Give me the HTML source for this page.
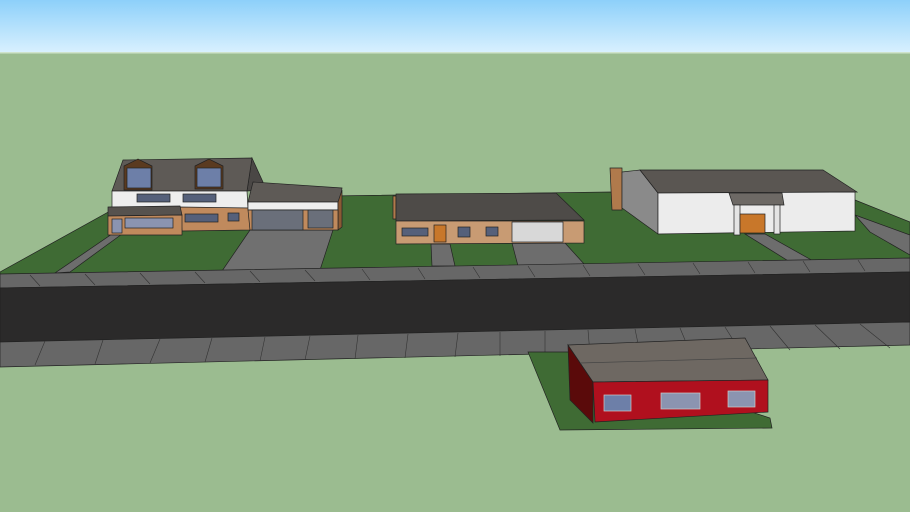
<!DOCTYPE html>
<html><head><meta charset="utf-8"><style>html,body{margin:0;padding:0;background:#9bbc90;overflow:hidden}svg{display:block}</style></head>
<body>
<svg width="910" height="512" viewBox="0 0 910 512" xmlns="http://www.w3.org/2000/svg">
<defs>
<linearGradient id="sky" x1="0" y1="0" x2="0" y2="1"><stop offset="0" stop-color="#8dd0fa"/><stop offset="1" stop-color="#d8f0fe"/></linearGradient>
</defs>
<rect width="910" height="512" fill="#9bbc90"/>
<rect width="910" height="52" fill="url(#sky)"/>
<rect y="52" width="910" height="1.5" fill="#cfe3cb"/>
<g stroke="#222" stroke-width="0.7">
<polygon points="0,272 112,210 330,196 610,192 855,200 910,222 910,262 0,276" fill="#3f6b34"/>
<polygon points="250,230 333,230 320,270 222,271" fill="#707070"/>
<polygon points="112,234 122,234 70,272 55,273" fill="#6d6d6d"/>
<polygon points="431,244 450,244 455,266 432,266" fill="#6d6d6d"/>
<polygon points="512,243 565,243 585,265 518,266" fill="#6d6d6d"/>
<polygon points="745,234 765,234 815,262 790,262" fill="#6d6d6d"/>
<polygon points="855,215 910,235 910,255 870,232" fill="#6d6d6d"/>
<polygon points="0,274 910,258 910,272 0,288" fill="#676767"/>
<polygon points="0,288 910,272 910,322 0,342" fill="#2b2a2a"/>
<polygon points="0,342 910,322 910,345 0,367" fill="#676767"/>
</g>
<g stroke="#333" stroke-width="0.6">
<path d="M40,286 L30,275 M95,285 L85,274 M150,284 L140,273 M205,283 L195,272 M260,282 L250,271 M315,281 L305,270 M370,280 L362,269 M425,279 L418,268 M480,278 L473,267 M535,277 L528,266 M590,276 L583,265 M645,275 L638,264 M700,274 L693,263 M755,273 L748,262 M810,272 L803,261 M865,271 L858,260"/>
<path d="M35,365 L45,341 M95,364 L103,340 M150,363 L160,339 M205,362 L212,338 M260,361 L265,337 M305,360 L310,336 M355,359 L358,335 M405,358 L408,334 M455,357 L458,333 M500,356 L500,332 M545,355 L545,331 M590,354 L588,330 M640,353 L635,329 M690,352 L680,328 M740,351 L725,327 M790,350 L770,326 M840,349 L815,325 M890,348 L860,324"/>
</g>
<g stroke="#222" stroke-width="0.7">
<polygon points="252,158 263,182 262,190 247,191" fill="#4a4745"/>
<polygon points="123,160 252,158 247,191 112,191" fill="#5e5a56"/>
<polygon points="124,166 138,159 152,166 152,190 124,190" fill="#5a3a20"/>
<rect x="127" y="168" width="24" height="20" fill="#6d7fa8"/>
<polygon points="195,166 209,159 223,166 223,189 195,189" fill="#5a3a20"/>
<rect x="197" y="168" width="24" height="19" fill="#6d7fa8"/>
<polygon points="112,191 247,191 248,210 112,210" fill="#eeeeee"/>
<rect x="137" y="194" width="33" height="8" fill="#55607a"/>
<rect x="183" y="194" width="33" height="8" fill="#55607a"/>
<polygon points="180,207 250,208 250,230 182,231" fill="#c08a5d"/>
<rect x="185" y="214" width="33" height="8" fill="#55607a"/>
<rect x="228" y="213" width="11" height="8" fill="#55607a"/>
<polygon points="108,207 180,206 182,215 108,216" fill="#56524e"/>
<polygon points="108,216 182,215 182,235 108,235" fill="#c08a5d"/>
<rect x="112" y="219" width="10" height="14" fill="#8b94b0"/>
<rect x="125" y="218" width="48" height="10" fill="#8b94b0"/>
<polygon points="253,182 342,188 340,202 248,202" fill="#5e5a56"/>
<polygon points="248,202 338,202 338,210 248,210" fill="#eeeeee"/>
<polygon points="338,202 342,190 342,227 338,230" fill="#8a5a34"/>
<polygon points="248,210 338,210 338,230 250,230" fill="#c08a5d"/>
<rect x="252" y="210" width="51" height="20" fill="#6a6f7a"/>
<rect x="308" y="210" width="25" height="18" fill="#6a6f7a"/>
<polygon points="393,196 396,196 396,219 393,219" fill="#b07a4c"/>
<polygon points="396,194 556,193 584,220 396,221" fill="#4e4b48"/>
<polygon points="396,221 584,221 584,243 396,244" fill="#c89b73"/>
<rect x="402" y="228" width="26" height="8" fill="#55607a"/>
<rect x="434" y="225" width="12" height="17" fill="#c8772a"/>
<rect x="458" y="227" width="12" height="10" fill="#55607a"/>
<rect x="486" y="227" width="12" height="9" fill="#55607a"/>
<rect x="512" y="222" width="51" height="20" fill="#d8d8d8"/>
<polygon points="610,168 622,168 622,210 612,210" fill="#b07a4c"/>
<polygon points="622,172 640,170 658,193 658,234 622,208" fill="#8a8a8a"/>
<polygon points="640,170 823,170 857,192 658,193" fill="#5a5652"/>
<polygon points="658,193 855,192 855,231 658,234" fill="#ececec"/>
<polygon points="729,193 782,193 784,205 733,205" fill="#6d6965"/>
<rect x="734" y="205" width="6" height="30" fill="#e4e4e4"/>
<rect x="774" y="205" width="6" height="29" fill="#e4e4e4"/>
<rect x="740" y="214" width="25" height="19" fill="#c8772a"/>
<polygon points="528,352 568,352 770,418 772,428 560,430" fill="#3f6b34"/>
<polygon points="568,345 593,382 593,423 570,400" fill="#5a0a0a"/>
<polygon points="568,345 745,338 768,380 593,382" fill="#6e6862"/>
<path d="M580,363 L757,358" stroke="#444"/>
<polygon points="593,382 768,380 768,412 595,422" fill="#b0101e"/>
<rect x="604" y="395" width="27" height="16" fill="#6d7fa8" stroke="#ccc"/>
<rect x="661" y="393" width="39" height="16" fill="#8b94b0" stroke="#ccc"/>
<rect x="728" y="391" width="27" height="16" fill="#8b94b0" stroke="#ccc"/>
</g>
</svg>
</body></html>
